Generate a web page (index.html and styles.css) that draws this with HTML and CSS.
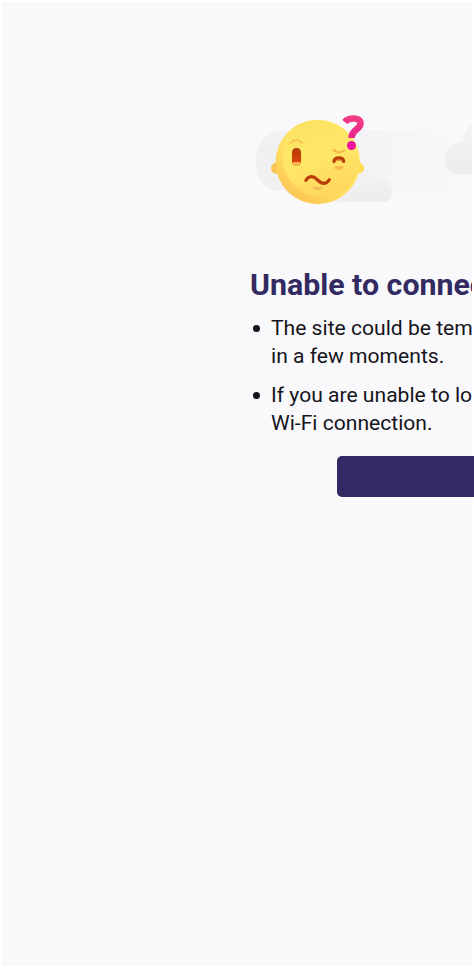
FILE: index.html
```html
<!DOCTYPE html>
<html lang="en">
<head>
<meta charset="utf-8">
<title>Unable to connect</title>
<link rel="stylesheet" href="styles.css">
</head>
<body>
<main class="page">
  <svg class="art" viewBox="250 100 222 120" aria-hidden="true">
    <defs>
      <linearGradient id="band" x1="0" x2="1" y1="0" y2="0"><stop offset="0" stop-color="#f0f0f3"/><stop offset=".5" stop-color="#f4f4f6"/><stop offset="1" stop-color="#f9f9fb"/></linearGradient>
      <linearGradient id="cloud" x1="0" x2="0" y1="0" y2="1"><stop offset="0" stop-color="#f3f3f5"/><stop offset="1" stop-color="#ededf0"/></linearGradient>
      <linearGradient id="shade" x1=".75" y1=".2" x2=".2" y2=".95"><stop offset="0" stop-color="#ffe565"/><stop offset=".6" stop-color="#ffdd60"/><stop offset="1" stop-color="#fbc454"/></linearGradient>
      <linearGradient id="face" x1=".3" y1="0" x2=".65" y2="1"><stop offset="0" stop-color="#fbe263"/><stop offset=".5" stop-color="#ffe767"/><stop offset="1" stop-color="#ffd45e"/></linearGradient>
      <linearGradient id="eye" x1="0" x2="0" y1="0" y2="1"><stop offset="0" stop-color="#b43a0b"/><stop offset="1" stop-color="#db4207"/></linearGradient>
      <linearGradient id="pink" gradientUnits="userSpaceOnUse" x1="358" y1="115" x2="348" y2="150"><stop offset="0" stop-color="#f34080"/><stop offset="1" stop-color="#e6139a"/></linearGradient>
    </defs>
    <path d="M286 130H472V192H362V202H318Q286 196 284 190Q274 193 266 186Q256 178 256 162Q256 140 272 133Q278 130 286 130Z" fill="url(#band)"/>
    <path d="M340 202V176Q352 167 361 168Q372 168 377 179Q390 180 392 190Q393 202 383 202Z" fill="url(#cloud)"/>
    <path d="M472 123Q464 129 463 142Q449 144 445 155Q444 174 459 174H472Z" fill="url(#cloud)"/>
    <path d="M278 162Q271 163 271 168.500Q271 174 279 174Z" fill="#fbc656"/>
    <path d="M357 162Q364 163 364 168.500Q364 173 357 174Z" fill="#ffdc50"/>
    <circle cx="317.8" cy="162" r="42.2" fill="url(#shade)"/>
    <path d="M291 130C303 117 333 117 347 133C364 151 360 180 344 191C330 201 306 198 293 184C279 169 280 143 291 130Z" fill="url(#face)"/>
    <path d="M290.5 143Q296 137 302 143" fill="none" stroke="#f8c24e" stroke-width="2" stroke-linecap="round"/>
    <path d="M292 163V153Q292 148 296.500 148Q301 148 301 153V163Q296.500 161 292 163Z" fill="url(#eye)"/>
    <path d="M292 163Q296.500 161 301 163L300 166H293Z" fill="#f7b449"/>
    <path d="M333.500 150Q339 154.500 344 150.500" fill="none" stroke="#f2b64c" stroke-width="2.2" stroke-linecap="round"/>
    <path d="M334 162Q334 157.500 339 157.500Q343.500 157.500 343.500 162Q339 160 334 162Z" fill="#e8973b"/>
    <path d="M334 161.500C334 156.500 343.700 156.500 343.700 161.500" fill="none" stroke="#b93b0a" stroke-width="3.200" stroke-linecap="round"/>
    <path d="M334 167Q339 165 344 167Q342 170 338.500 170Q335 170 334 167Z" fill="#f6b84c"/>
    <path d="M305.800 180.500C309 175.500 313 175.500 317 179.500C322 184.500 326 184.500 329.300 179.800" fill="none" stroke="#bc3c0a" stroke-width="3.200" stroke-linecap="round"/>
    <path d="M312.500 186.500Q317.500 188.500 323 186.500Q321.500 190 317.500 190Q314 190 312.500 186.500Z" fill="#eeb552"/>
    <path d="M344.800 122C348.500 117.500 360.500 116.800 360.500 123.500C360.500 129.500 351.800 129 351.600 138" fill="none" stroke="url(#pink)" stroke-width="6.600"/>
    <circle cx="351.500" cy="145.500" r="4.500" fill="#ee169c"/>
  </svg>
  <section class="message">
    <h1>Unable to connec</h1>
    <ul>
      <li>The site could be tem<br>in a few moments.</li>
      <li>If you are unable to lo<br>Wi-Fi connection.</li>
    </ul>
  </section>
  <button class="retry" type="button" aria-label="Try Again"></button>
</main>
</body>
</html>
```
FILE: styles.css
```css
* { box-sizing: border-box; }
html { background: #fff; overflow: hidden; }
body { margin: 0; height: 968px; padding: 2px; overflow: hidden; font-family: Roboto, sans-serif; }
.page { width: 470px; height: 964px; padding-top: 98px; background: #f9f9fc; }
.art { display: block; width: 222px; height: 120px; margin-left: 248px; }
.message { padding: 47px 0 0 248px; overflow: hidden; white-space: nowrap; }
h1 { margin: 0; color: #322a61; font-size: 30.3px; line-height: 36px; font-weight: 700; }
ul { margin: 11.4px 0 0; padding-left: 21px; color: #15141a; font-size: 21.1px; line-height: 27.7px; list-style: none; }
li { position: relative; margin-bottom: 11.5px; }
li::before { content: ""; position: absolute; left: -18px; top: 11px; width: 7px; height: 7px; border-radius: 50%; background: currentColor; }
.retry { display: block; width: 160px; height: 41px; margin: 7.5px 0 0 335px; padding: 0; border: 0; border-radius: 5px; background: #322a64; }
```
